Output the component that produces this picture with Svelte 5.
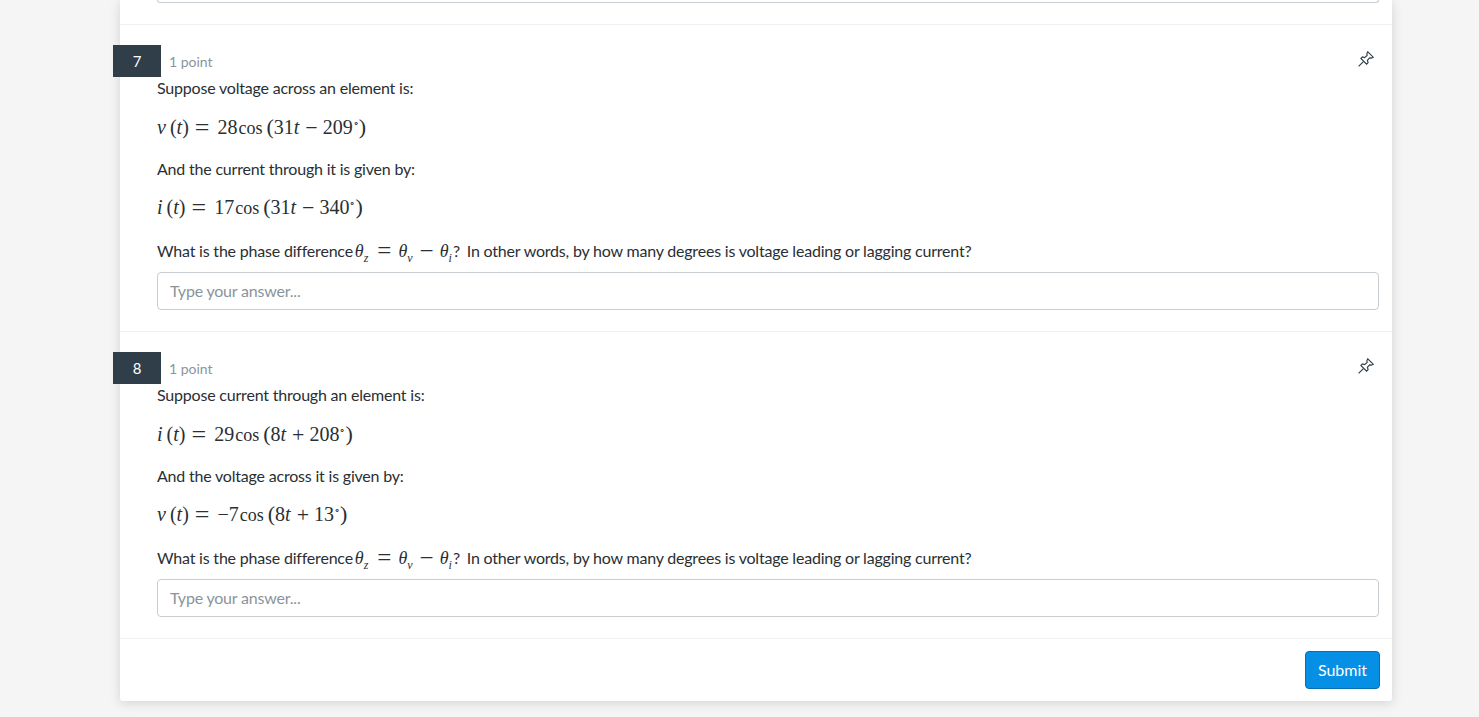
<script>
  const questions = [
    {
      n: 7,
      intro: 'Suppose voltage across an element is:',
      first: { v: 'v', pre: '28', arg: '31', sign: '−', deg: '209' },
      mid: 'And the current through it is given by:',
      second: { v: 'i', pre: '17', arg: '31', sign: '−', deg: '340' }
    },
    {
      n: 8,
      intro: 'Suppose current through an element is:',
      first: { v: 'i', pre: '29', arg: '8', sign: '+', deg: '208' },
      mid: 'And the voltage across it is given by:',
      second: { v: 'v', pre: '−7', arg: '8', sign: '+', deg: '13' }
    }
  ];
</script>

{#snippet formula(f)}
  <p class="math">
    <i>{f.v}</i><span class="sp3"></span>(<i>t</i>)<span class="op">=</span>{f.pre}<span class="cos">cos</span><span class="paren">(</span>{f.arg}<i class="t">t</i><span class="sign">{f.sign}</span>{f.deg}<sup>∘</sup><span class="paren">)</span>
  </p>
{/snippet}

<div class="page">
  <main class="card">
    <div class="stub"><div class="stub-input"></div></div>

    {#each questions as q}
      <section class="row">
        <header class="head">
          <span class="badge">{q.n}</span>
          <span class="points">1 point</span>
          <svg class="pin" viewBox="0 0 16 16" width="16" height="16" fill="none" stroke="#2f3e48" stroke-width="1.15">
            <path d="M0.6 15.4 L5.4 10.6" />
            <path d="M9.8 0.8 L15.2 6.2 L13.4 7.1 L11.6 6.9 L9.4 9.4 L10.1 11.6 L8.6 13.1 L2.9 7.4 L4.4 5.9 L6.6 6.6 L9.1 4.4 L8.9 2.6 Z" />
          </svg>
        </header>
        <div class="body">
          <p class="text">{q.intro}</p>
          {@render formula(q.first)}
          <p class="text">{q.mid}</p>
          {@render formula(q.second)}
          <p class="text ask">What is the phase difference <span class="inl"><i>θ<sub>z</sub></i><span class="eq">=</span><i>θ<sub>v</sub></i><span class="minus">−</span><i>θ<sub>i</sub></i></span><span class="qm">?</span> In other words, by how many degrees is voltage leading or lagging current?</p>
          <input class="answer" type="text" placeholder="Type your answer..." />
        </div>
      </section>
    {/each}

    <footer class="foot">
      <button class="submit" type="button">Submit</button>
    </footer>
  </main>
</div>

<style>
  :global(body) {
    margin: 0;
    background: #f5f5f5;
    overflow: hidden;
  }
  .page {
    height: 717px;
    padding-left: 120px;
    font-family: Lato, "Open Sans", sans-serif;
    color: #2f3b45;
  }
  .card {
    width: 1272px;
    height: 701px;
    background: #fff;
    border-radius: 0 0 3px 3px;
    box-shadow: 0 2px 12px rgba(0, 0, 0, 0.14);
    display: flex;
    flex-direction: column;
  }
  .stub {
    height: 24px;
    padding: 0 13px 0 37px;
    box-sizing: border-box;
  }
  .stub-input {
    height: 3px;
    box-sizing: border-box;
    border: 1px solid #c8cdd2;
    border-top: 0;
    border-radius: 0 0 4px 4px;
  }
  .row {
    height: 307px;
    box-sizing: border-box;
    padding: 20px 13px 0 37px;
    border-top: 1px solid #f1f1f1;
  }
  .head {
    display: flex;
    align-items: center;
    height: 32px;
    margin-left: -44px;
    position: relative;
  }
  .badge {
    width: 48px;
    height: 32px;
    background: #2f3e48;
    color: #fff;
    font-size: 15px;
    display: flex;
    align-items: center;
    justify-content: center;
  }
  .points {
    margin-left: 8px;
    font-size: 14px;
    color: #8a949c;
  }
  .pin {
    margin-left: auto;
    margin-right: 5px;
    margin-top: -4px;
  }
  .body {
    display: flex;
    flex-direction: column;
  }
  .text {
    margin: 0;
    height: 22px;
    line-height: 22px;
    font-size: 16px;
    letter-spacing: -0.2px;
    white-space: nowrap;
    color: #2a2f33;
  }
  .math {
    margin: 17px 0 20px;
    height: 22px;
    line-height: 22px;
    font-family: "Liberation Serif", serif;
    font-size: 20px;
    color: #2a2f33;
    white-space: nowrap;
  }
  .math:nth-of-type(4) {
    margin-top: 16px;
  }
  .sp3 {
    display: inline-block;
    width: 4px;
  }
  .op {
    margin: 0 8px 0 6px;
    font-size: 26px;
    line-height: 0;
    vertical-align: -2px;
  }
  .sign {
    margin: 0 5px 0 7px;
    font-size: 22px;
    line-height: 0;
    vertical-align: -1px;
  }
  .cos {
    font-size: 18px;
    margin: 0 4px 0 1px;
  }
  .paren {
    font-size: 22px;
  }
  .t {
    margin-right: -1px;
  }
  sup {
    font-size: 10px;
    line-height: 0;
  }
  .ask {
    margin-top: 2px;
  }
  .inl {
    font-family: "Liberation Serif", serif;
    font-size: 18px;
    letter-spacing: 0;
    margin-left: -2px;
  }
  .inl sub {
    font-size: 12px;
    line-height: 0;
  }
  .eq {
    margin: 0 7px 0 9px;
    font-size: 25px;
    line-height: 0;
    vertical-align: -2px;
  }
  .minus {
    margin: 0 6px 0 7px;
    font-size: 25px;
    line-height: 0;
    vertical-align: -2px;
  }
  .qm {
    margin: 0 3px 0 1px;
  }
  .answer {
    display: block;
    box-sizing: border-box;
    width: 100%;
    height: 38px;
    margin-top: 10px;
    padding: 0 12px 2px;
    border: 1px solid #c8cdd2;
    border-radius: 4px;
    background: #fff;
    font-family: inherit;
    font-size: 16px;
    letter-spacing: -0.2px;
    outline: none;
  }
  .answer::placeholder {
    color: #8a949c;
    opacity: 1;
  }
  .foot {
    flex: 1;
    display: flex;
    justify-content: flex-end;
    align-items: flex-start;
    padding: 12px 12px 0 0;
    border-top: 1px solid #f1f1f1;
  }
  .submit {
    width: 75px;
    height: 38px;
    border: 1px solid #0670b5;
    border-radius: 4px;
    background: #0590e6;
    color: #fff;
    font-family: inherit;
    font-size: 16px;
    padding: 0 0 2px;
  }
</style>
